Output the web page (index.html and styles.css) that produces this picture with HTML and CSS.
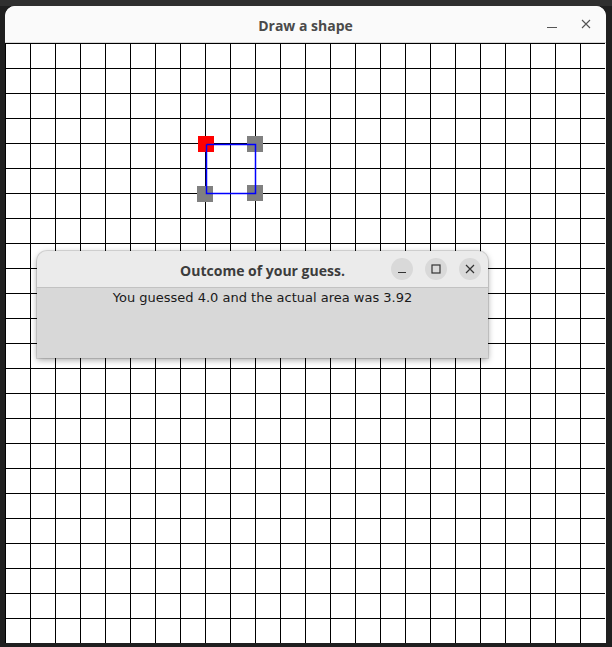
FILE: index.html
```html
<!DOCTYPE html>
<html lang="en">

<head>
    <meta charset="UTF-8">
    <title>Draw a shape</title>
    <link rel="stylesheet" href="styles.css">
</head>

<body>
    <div class="desktop">
        <div class="window">
            <!-- main window title bar -->
            <div class="titlebar">
                <span class="title">Draw a shape</span>
                <div class="win-buttons">
                    <svg class="win-btn" width="10" height="10" viewBox="0 0 10 10"><path d="M0 8.5h10" stroke="#555" stroke-width="1.1" /></svg>
                    <svg class="win-btn" width="10" height="10" viewBox="0 0 10 10"><path d="M1 1l8 8M9 1l-8 8" stroke="#555" stroke-width="1.1" /></svg>
                </div>
            </div>

            <!-- drawing canvas with grid -->
            <div class="canvas">
                <svg class="shape" width="600" height="600" viewBox="0 0 600 600">
                    <rect x="193" y="93" width="16" height="16" fill="#ff0000" />
                    <rect x="242" y="93" width="16" height="16" fill="#808080" />
                    <rect x="192" y="143" width="16" height="16" fill="#808080" />
                    <rect x="242" y="142" width="16" height="16" fill="#808080" />
                    <polyline points="201.5,101.5 250.5,101.5 250.5,150.5 201.5,150.5 201.5,101.5"
                        fill="none" stroke="#0000ff" stroke-width="1.5" />
                </svg>

                <!-- result dialog -->
                <div class="dialog">
                    <div class="dialog-titlebar">
                        <span class="dialog-title">Outcome of your guess.</span>
                        <div class="dialog-buttons">
                            <span class="circle-btn">
                                <svg width="10" height="10" viewBox="0 0 10 10"><path d="M1 8.5h8" stroke="#333" stroke-width="1.2" /></svg>
                            </span>
                            <span class="circle-btn">
                                <svg width="10" height="10" viewBox="0 0 10 10"><rect x="1" y="1" width="8" height="8" fill="none" stroke="#333" stroke-width="1.2" /></svg>
                            </span>
                            <span class="circle-btn">
                                <svg width="10" height="10" viewBox="0 0 10 10"><path d="M1 1l8 8M9 1l-8 8" stroke="#333" stroke-width="1.2" /></svg>
                            </span>
                        </div>
                    </div>
                    <div class="dialog-body">You guessed 4.0 and the actual area was 3.92</div>
                </div>
            </div>
        </div>
    </div>
</body>

</html>
```

FILE: styles.css
```css
body,
html {
    margin: 0;
    padding: 0;
    height: 100%;
    background: #1f1f1f;
    overflow: hidden;
}

/* dark desktop behind the window */
.desktop {
    height: 647px;
    background: linear-gradient(#2f2f2f 0, #2f2f2f 6px, #1f1f1f 6px);
    padding: 6px 0 0 5px;
    box-sizing: border-box;
}

.window {
    width: 601px;
    background: #ffffff;
    border-radius: 10px 10px 0 0;
    overflow: hidden;
}

/* title bar of the main window */
.titlebar {
    height: 36px;
    background: #fafafa;
    border-bottom: 1px solid #d6d6d6;
    display: flex;
    align-items: center;
    justify-content: center;
    position: relative;
}

.title {
    font-family: "Open Sans", "DejaVu Sans", sans-serif;
    font-weight: bold;
    font-size: 14px;
    color: #4a4a4a;
    margin-top: 2px;
}

.win-buttons {
    position: absolute;
    right: 15px;
    top: 0;
    height: 100%;
    display: flex;
    align-items: center;
    gap: 24px;
}

.win-btn {
    display: block;
}

/* grid canvas 600x600, lines every 25px */
.canvas {
    width: 600px;
    height: 600px;
    position: relative;
    background-color: #ffffff;
    background-image:
        linear-gradient(to right, #000 1px, transparent 1px),
        linear-gradient(#000 1px, transparent 1px);
    background-size: 25px 25px;
}

.shape {
    position: absolute;
    left: 0;
    top: 0;
}

/* popup dialog */
.dialog {
    position: absolute;
    left: 32px;
    top: 208px;
    width: 451px;
    height: 107px;
    background: #d8d8d8;
    border-radius: 10px 10px 0 0;
    box-shadow: 0 2px 6px rgba(0, 0, 0, 0.35), 0 0 0 1px rgba(0, 0, 0, 0.12);
    overflow: hidden;
}

.dialog-titlebar {
    height: 36px;
    background: #ebebeb;
    border-bottom: 1px solid #c2c2c2;
    display: flex;
    align-items: center;
    justify-content: center;
    position: relative;
}

.dialog-title {
    font-family: "Open Sans", "DejaVu Sans", sans-serif;
    font-weight: bold;
    font-size: 14px;
    color: #3c3c3c;
    margin-top: 2px;
}

.dialog-buttons {
    position: absolute;
    right: 7px;
    top: 0;
    height: 100%;
    display: flex;
    align-items: center;
    gap: 12px;
}

.circle-btn {
    width: 22px;
    height: 22px;
    border-radius: 50%;
    background: #d9d9d9;
    display: flex;
    align-items: center;
    justify-content: center;
}

.dialog-body {
    font-family: "DejaVu Sans", sans-serif;
    font-size: 13px;
    color: #1a1a1a;
    text-align: center;
    padding-top: 2px;
}
```
